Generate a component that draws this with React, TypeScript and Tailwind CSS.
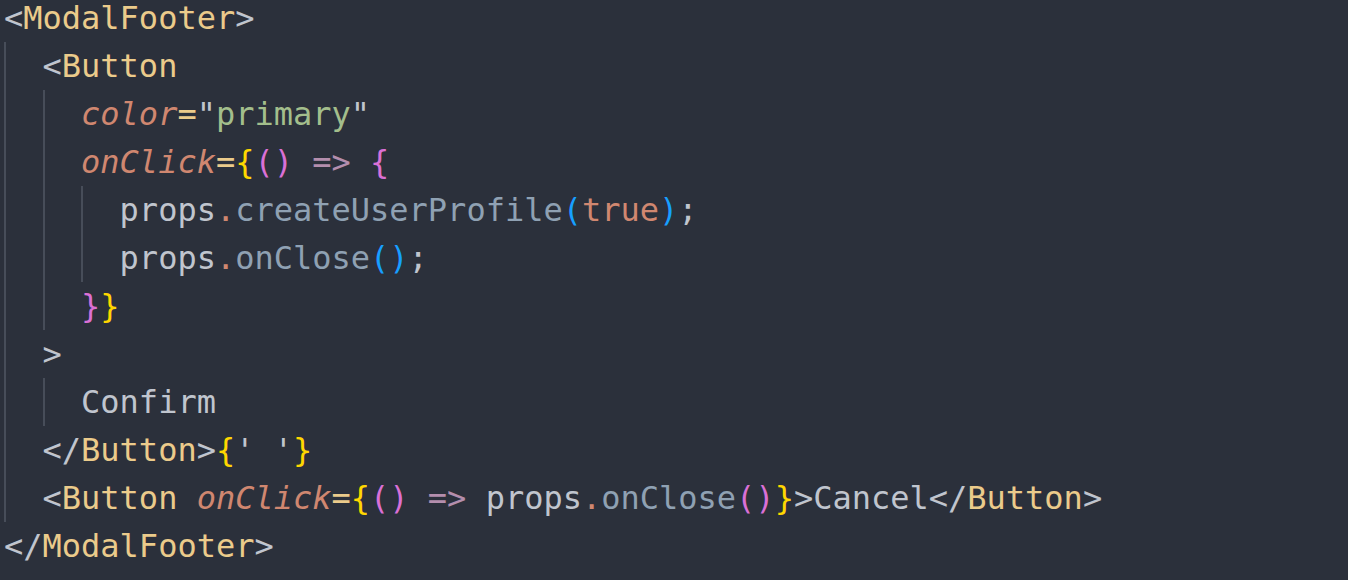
import React from 'react';

type Tok = [string, string];

const P = 'text-[#c0c5ce]';
const TAG = 'text-[#ebcb8b]';
const ATTR = 'text-[#d08770] italic';
const STR = 'text-[#a3be8c]';
const GOLD = 'text-[#ffd700]';
const ORCHID = 'text-[#da70d6]';
const BLUE = 'text-[#179fff]';
const ARROW = 'text-[#b48ead]';
const DOT = 'text-[#d08770]';
const FN = 'text-[#8fa1b3]';

const lines: { indent: number; toks: Tok[] }[] = [
  { indent: 0, toks: [['<', P], ['ModalFooter', TAG], ['>', P]] },
  { indent: 1, toks: [['<', P], ['Button', TAG]] },
  { indent: 2, toks: [['color', ATTR], ['=', TAG], ['"', P], ['primary', STR], ['"', P]] },
  {
    indent: 2,
    toks: [['onClick', ATTR], ['=', TAG], ['{', GOLD], ['()', ORCHID], [' ', P], ['=>', ARROW], [' ', P], ['{', ORCHID]],
  },
  {
    indent: 3,
    toks: [['props', P], ['.', DOT], ['createUserProfile', FN], ['(', BLUE], ['true', DOT], [')', BLUE], [';', P]],
  },
  { indent: 3, toks: [['props', P], ['.', DOT], ['onClose', FN], ['()', BLUE], [';', P]] },
  { indent: 2, toks: [['}', ORCHID], ['}', GOLD]] },
  { indent: 1, toks: [['>', P]] },
  { indent: 2, toks: [['Confirm', P]] },
  { indent: 1, toks: [['</', P], ['Button', TAG], ['>', P], ['{', GOLD], ["' '", P], ['}', GOLD]] },
  {
    indent: 1,
    toks: [
      ['<', P], ['Button', TAG], [' ', P], ['onClick', ATTR], ['=', TAG], ['{', GOLD], ['()', ORCHID], [' ', P],
      ['=>', ARROW], [' ', P], ['props', P], ['.', DOT], ['onClose', FN], ['()', ORCHID], ['}', GOLD], ['>', P],
      ['Cancel', P], ['</', P], ['Button', TAG], ['>', P],
    ],
  },
  { indent: 0, toks: [['</', P], ['ModalFooter', TAG], ['>', P]] },
];

export default function App() {
  return (
    <div className="w-[1348px] h-[580px] overflow-hidden bg-[#2b303b]">
      <div
        className="-mt-[6px] pl-[4px] text-[32px] leading-[48px] whitespace-pre"
        style={{ fontFamily: '"DejaVu Sans Mono", "Liberation Mono", monospace' }}
      >
        {lines.map((line, i) => (
          <div key={i} className="flex h-[48px]">
            {Array.from({ length: line.indent }).map((_, k) => (
              <span key={k} className="w-[2ch] shrink-0 border-l-2 border-[#474d59]" />
            ))}
            <span>
              {line.toks.map(([t, c], j) => (
                <span key={j} className={c}>
                  {t}
                </span>
              ))}
            </span>
          </div>
        ))}
      </div>
    </div>
  );
}
